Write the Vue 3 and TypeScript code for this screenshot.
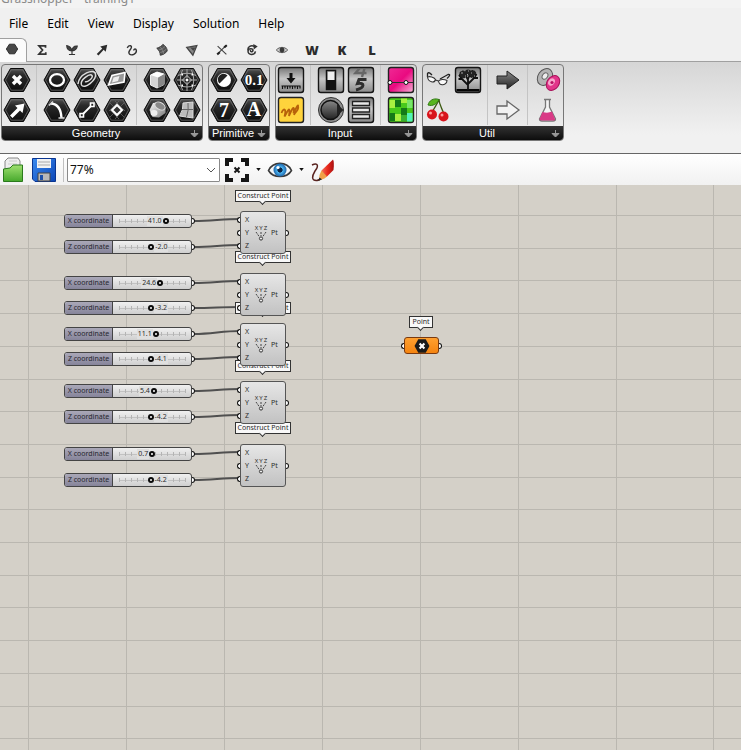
<script setup lang="ts">
import { ref } from 'vue'

interface Panel {
  name: string
  groups: string[][]
}

interface SliderNode {
  id: string
  label: string
  top: number
  value: number
}

const menu = ['File', 'Edit', 'View', 'Display', 'Solution', 'Help']

const tabs = [
  { name: 'Params', icon: 't-params' },
  { name: 'Maths', icon: 't-maths' },
  { name: 'Sets', icon: 't-sets' },
  { name: 'Vector', icon: 't-vector' },
  { name: 'Curve', icon: 't-curve' },
  { name: 'Surface', icon: 't-surface' },
  { name: 'Mesh', icon: 't-mesh' },
  { name: 'Intersect', icon: 't-intersect' },
  { name: 'Transform', icon: 't-transform' },
  { name: 'Display', icon: 't-eye' },
  { name: 'W', icon: '' },
  { name: 'K', icon: '' },
  { name: 'L', icon: '' },
]

// Each group is filled column by column, two icons per column.
const panels: Panel[] = [
  {
    name: 'Geometry',
    groups: [
      ['point', 'vector'],
      ['circle', 'arc', 'curve', 'line', 'plane', 'rectangle'],
      ['box', 'mesh', 'surface', 'brep'],
    ],
  },
  { name: 'Primitive', groups: [['boolean', 'integer', 'number', 'text']] },
  {
    name: 'Input',
    groups: [['button', 'panel'], ['toggle', 'knob', 'digits', 'list'], ['gradient', 'swatch']],
  },
  {
    name: 'Util',
    groups: [['glasses', 'cherry', 'tree', ''], ['dark-arrow', 'light-arrow'], ['discs', 'flask']],
  },
]

// Icons that are a character on a hexagon.
const letters: Record<string, { char: string; size: number; y: number }> = {
  number: { char: '0.1', size: 15, y: 20 },
  integer: { char: '7', size: 20, y: 22 },
  text: { char: 'A', size: 20, y: 21 },
}

const zoomLevel = ref('77%')
const zoomLevels = ['50%', '77%', '100%', '150%', '200%']

const sliders = ref<SliderNode[]>([
  { id: 'x1', label: 'X coordinate', top: 29, value: 41.0 },
  { id: 'z1', label: 'Z coordinate', top: 55, value: -2.0 },
  { id: 'x2', label: 'X coordinate', top: 91, value: 24.6 },
  { id: 'z2', label: 'Z coordinate', top: 116, value: -3.2 },
  { id: 'x3', label: 'X coordinate', top: 142, value: 11.1 },
  { id: 'z3', label: 'Z coordinate', top: 167, value: -4.1 },
  { id: 'x4', label: 'X coordinate', top: 199, value: 5.4 },
  { id: 'z4', label: 'Z coordinate', top: 225, value: -4.2 },
  { id: 'x5', label: 'X coordinate', top: 262, value: 0.7 },
  { id: 'z5', label: 'Z coordinate', top: 288, value: -4.2 },
])

const components = [
  { top: 26, tag: 5 },
  { top: 88, tag: 66 },
  { top: 138, tag: 117 },
  { top: 196, tag: 175 },
  { top: 259, tag: 237 },
]

const wires = sliders.value.map((s, i) => {
  const y1 = s.top + 7
  const y2 = components[Math.floor(i / 2)].top + (i % 2 === 0 ? 8 : 34)
  return `M194 ${y1} C212 ${y1} 222 ${y2} 240 ${y2}`
})

const gridX = Array.from({ length: 30 }, (_, i) => Math.round(28.4 + i * 97.87) + 0.5)
const gridY = Array.from({ length: 60 }, (_, i) => Math.round(30 + i * 32.7) + 0.5)

function valueStyle(v: number) {
  const thumb = 6 + ((v + 100) / 200) * 66
  return v >= 0 ? { right: `${77 - thumb + 4}px` } : { left: `${thumb + 3}px` }
}
</script>

<template>
  <div class="window">
    <svg class="sheet" aria-hidden="true">
      <defs>
        <linearGradient id="gHex" x1="0" y1="0" x2="0" y2="1">
          <stop offset="0" stop-color="#555" /><stop offset=".3" stop-color="#2a2a2a" /><stop offset="1" stop-color="#0c0c0c" />
        </linearGradient>
        <linearGradient id="gSteel" x1="0" y1="0" x2="0" y2="1">
          <stop offset="0" stop-color="#777" /><stop offset=".45" stop-color="#c6c6c6" /><stop offset="1" stop-color="#8a8a8a" />
        </linearGradient>
        <linearGradient id="gSolid" x1="0" y1="0" x2="1" y2="1">
          <stop offset="0" stop-color="#fff" /><stop offset="1" stop-color="#777" />
        </linearGradient>
        <linearGradient id="gPink" x1="0" y1="0" x2="1" y2="1">
          <stop offset="0" stop-color="#f02a95" /><stop offset=".5" stop-color="#ea0a80" /><stop offset="1" stop-color="#f9b4d8" />
        </linearGradient>
        <linearGradient id="gGreen" x1="0" y1="0" x2="0" y2="1">
          <stop offset="0" stop-color="#9fe070" /><stop offset="1" stop-color="#46a82c" />
        </linearGradient>
        <linearGradient id="gBlue" x1="0" y1="0" x2="1" y2="1">
          <stop offset="0" stop-color="#3b8bf0" /><stop offset="1" stop-color="#0b45b5" />
        </linearGradient>
        <linearGradient id="gRed" x1="0" y1="0" x2="1" y2="0">
          <stop offset="0" stop-color="#f4705a" /><stop offset=".5" stop-color="#e8281c" /><stop offset="1" stop-color="#a81010" />
        </linearGradient>
        <linearGradient id="gArrow" x1="0" y1="0" x2="0" y2="1">
          <stop offset="0" stop-color="#888" /><stop offset="1" stop-color="#222" />
        </linearGradient>
        <radialGradient id="gIris"><stop offset="0" stop-color="#0b2545" /><stop offset=".35" stop-color="#0b2545" /><stop offset=".45" stop-color="#4bb4f0" /><stop offset="1" stop-color="#1a62a8" /></radialGradient>
        <g id="hex">
          <path d="M8.500 3.500H21.500L28 15L21.500 26.500H8.500L2 15Z" fill="url(#gHex)" stroke="#0a0a0a" stroke-linejoin="round" />
          <path d="M9.200 4.800H20.800L26.500 15L20.800 25.200H9.200L3.500 15Z" fill="none" stroke="#777" stroke-width=".7" />
        </g>
        <g id="tile">
          <rect x="2.500" y="2.500" width="25" height="25" rx="2.500" fill="url(#gSteel)" stroke="#161616" stroke-width="1.400" />
        </g>
      </defs>

      <symbol id="t-params" viewBox="0 0 16 16"><path d="M5 2.500H11L14.500 8L11 13.500H5L1.500 8Z" fill="#484848" stroke="#222" /></symbol>
      <symbol id="t-maths" viewBox="0 0 16 16"><path d="M12 5.500V3.200H4.500L8.600 8L4.500 12.800H12.300V10.500" fill="none" stroke="#333" stroke-width="2" /></symbol>
      <symbol id="t-sets" viewBox="0 0 16 16"><path d="M8 13V8M8 9C7 5 5 3.500 2 3C2 6.500 4.500 8.500 8 9C8 6 10 3 14 3.500C13.500 7 11 8.500 8 9M4.500 13.200H11.500" fill="#444" stroke="#333" stroke-width="1.300" /></symbol>
      <symbol id="t-vector" viewBox="0 0 16 16"><path d="M2 12.500L8.300 6.200L6 4L14 2L12.200 10L9.900 7.700L4 14.200Z" fill="#2c2c2c" /></symbol>
      <symbol id="t-curve" viewBox="0 0 16 16"><path d="M2.500 5.500C5 1.500 8.500 3 7 6C5.500 9 3 10 5 12.500C7.500 15 13.500 12.500 13 8.500C12.600 6 10 6.500 10 8.500" fill="none" stroke="#333" stroke-width="1.600" /></symbol>
      <symbol id="t-surface" viewBox="0 0 16 16"><path d="M2 6C5 5 8 3.500 9 1.500C12 3.500 14 6 14 9C12 12 9 13.500 6 14C6 10.500 4.500 8 2 6Z" fill="#555" stroke="#333" /><path d="M6 4.500Q9.500 8 10 12.500M4.500 8Q9 7 11.500 4M6 11Q10.500 10 13.500 6.500" fill="none" stroke="#999" stroke-width=".7" /></symbol>
      <symbol id="t-mesh" viewBox="0 0 16 16"><path d="M2 5L13.500 3L9 14Z" fill="#888" stroke="#444" stroke-width="1.500" /><path d="M6 5L9.500 9L12 5Z" fill="#444" /></symbol>
      <symbol id="t-intersect" viewBox="0 0 16 16"><path d="M3 3.500L13 13M13 2.500L3 12.500" stroke="#444" stroke-width="1.300" /><path d="M10.500 5L13.500 2.500M2.500 13L5.500 10.500" stroke="#222" stroke-width="2.400" /></symbol>
      <symbol id="t-transform" viewBox="0 0 16 16"><path d="M12 9.500C11 14.500 3 14.500 3.500 9C4 5.500 10 6 9 9C8 11 5.500 9.500 6.500 8M3.500 8.500C2.500 4 7 2 11 4" fill="none" stroke="#333" stroke-width="1.700" /><path d="M9.500 1L14.500 4L10 7.500Z" fill="#333" /></symbol>
      <symbol id="t-eye" viewBox="0 0 16 16"><path d="M1.500 8C5 4 11 4 14.500 8C11 12 5 12 1.500 8Z" fill="#ccc" stroke="#444" /><circle cx="8" cy="8" r="2.800" fill="#3a3a3a" /></symbol>

      <symbol id="point" viewBox="0 0 30 30"><use href="#hex" /><path d="M11 11L19 19M19 11L11 19" stroke="#fff" stroke-width="3.400" /></symbol>
      <symbol id="vector" viewBox="0 0 30 30"><use href="#hex" /><path d="M8 20.500L15.500 13L13 10.500L22.500 8.500L20.500 18L18 15.500L10.500 23Z" fill="#fff" /></symbol>
      <symbol id="circle" viewBox="0 0 30 30"><use href="#hex" /><ellipse cx="15" cy="15" rx="7" ry="5.800" fill="none" stroke="#fff" stroke-width="2.300" /></symbol>
      <symbol id="arc" viewBox="0 0 30 30"><use href="#hex" /><path d="M9 8.500C15 9 19 14 19.500 23" fill="none" stroke="#fff" stroke-width="2.400" /><path d="M7 10.500L11 6.500M16.500 23H22.500" stroke="#ddd" stroke-width="1.500" /></symbol>
      <symbol id="curve" viewBox="0 0 30 30"><use href="#hex" /><path d="M6 19C7 9 22 3 23.500 8.500C25 15 12 25 9.500 20C7.500 15 18 8 20 10.500C21.500 13 15 18 13 16.500" fill="none" stroke="#ddd" stroke-width="1.500" /></symbol>
      <symbol id="line" viewBox="0 0 30 30"><use href="#hex" /><path d="M10 20L20 10" stroke="#fff" stroke-width="1.800" /><path d="M8 18.500H11.500V22H8ZM18.500 8H22V11.500H18.500Z" fill="#222" stroke="#fff" stroke-width="1.600" /></symbol>
      <symbol id="plane" viewBox="0 0 30 30"><use href="#hex" /><path d="M6.500 20L10 10.500L23 7.500L22 17Z" fill="#999" stroke="#fff" stroke-width="1.600" /><path d="M11.500 12.500L17.500 11L16 16L10 17.500Z" fill="#eee" /></symbol>
      <symbol id="rectangle" viewBox="0 0 30 30"><use href="#hex" /><path d="M8 8L22 22M22 8L8 22M8 15L17 24M13 6L23 16M17 6L7 16M22 14L13 24" stroke="#666" stroke-width=".8" /><path d="M15 10L20 15L15 20L10 15Z" fill="#333" stroke="#fff" stroke-width="2" /></symbol>
      <symbol id="box" viewBox="0 0 30 30"><use href="#hex" /><path d="M8.500 10L15 7L22 9V19.500L15 23L8.500 20Z" fill="#d4d4d4" stroke="#eee" /><path d="M16 12.500V23L22 19.500V9Z" fill="#888" /><path d="M8.500 10L16 12.500L22 9L15 7Z" fill="#fff" /></symbol>
      <symbol id="surface" viewBox="0 0 30 30"><use href="#hex" /><path d="M6 10.500Q15 6 24 10.500M5 15H25M6 20Q15 24 24 20M10.500 5Q6 15 10.500 25M15 4V26M19.500 5Q24 15 19.500 25" fill="none" stroke="#aaa" /><path d="M15 10.500L19.500 15L15 19.500L10.500 15Z" fill="none" stroke="#ccc" /><path d="M9.500 9.500H11M19.500 9.500H21M9.500 20.500H11M19.500 20.500H21M14 15H16" stroke="#fff" stroke-width="2" /></symbol>
      <symbol id="mesh" viewBox="0 0 30 30"><use href="#hex" /><path d="M7.500 15L11 8L18 7L23.500 12V18L17 22.500L10.500 22Z" fill="url(#gSolid)" /><ellipse cx="18" cy="11" rx="5.500" ry="3.500" fill="#888" stroke="#ddd" transform="rotate(30 18 11)" /><ellipse cx="12" cy="18" rx="3.500" ry="3" fill="#eee" /></symbol>
      <symbol id="brep" viewBox="0 0 30 30"><use href="#hex" /><path d="M11 8L21 7V23L7.500 21Q11.500 15 11 8Z" fill="#bbb" stroke="#ddd" /><path d="M16 8Q17 15 14.500 22M10 14.500H21" fill="none" stroke="#666" /></symbol>
      <symbol id="boolean" viewBox="0 0 30 30"><use href="#hex" /><circle cx="15" cy="15" r="7" fill="#fff" /><path d="M10.500 18.500A5.500 5.500 0 0 1 18.500 10.500Z" fill="#222" /></symbol>

      <symbol id="button" viewBox="0 0 30 30"><use href="#tile" /><path d="M13.500 8H16.500V13H19.500L15 18.500L10.500 13H13.500Z" fill="#111" /><path d="M5.500 21H24.500M6.500 21V24M9 21V23.500M11.500 21V24M14 21V23.500M16.500 21V24M19 21V23.500M21.500 21V24M24 21V23.500" stroke="#111" stroke-width="1.200" /></symbol>
      <symbol id="panel" viewBox="0 0 30 30"><rect x="2.500" y="2.500" width="25" height="25" rx="2.500" fill="#ffd33c" stroke="#222" stroke-width="1.400" /><path d="M5.500 18C8 12 10.500 14 8.500 21.500C12 15 14.500 10 13 21C16 14 19 8 17.500 18.500C20 13 22.500 8.500 22 11C23.500 15 19 17 18 20" fill="none" stroke="#b8620a" stroke-width="1.800" /></symbol>
      <symbol id="toggle" viewBox="0 0 30 30"><use href="#tile" /><rect x="10.500" y="5.500" width="9" height="19" fill="#b4b4b4" stroke="#111" stroke-width="1.500" /><rect x="12" y="7" width="6" height="8.500" fill="#eee" /><rect x="11" y="15" width="8" height="9" fill="#111" /></symbol>
      <symbol id="digits" viewBox="0 0 30 30"><use href="#tile" /><path d="M13.500 3.500L9.500 8H20.500M18.500 3.500L16 12" fill="none" stroke="#666" stroke-width="2.400" /><path d="M20.500 14.500H13L11.500 18.500C19 17 19 23 10 25" fill="none" stroke="#2e2e2e" stroke-width="3" /></symbol>
      <symbol id="knob" viewBox="0 0 30 30"><circle cx="15" cy="15" r="12.500" fill="#8f8f8f" stroke="#333" /><circle cx="14.500" cy="15" r="9.500" fill="url(#gArrow)" stroke="#111" stroke-width="1.500" /><path d="M21 9L27.500 15L21 21Z" fill="#222" /></symbol>
      <symbol id="list" viewBox="0 0 30 30"><use href="#tile" /><path d="M6.500 6.500H23.500V10.500H6.500ZM6.500 13H23.500V17H6.500ZM6.500 19.500H23.500V23.500H6.500Z" fill="#e8e8e8" stroke="#222" stroke-width="1.300" /></symbol>
      <symbol id="gradient" viewBox="0 0 30 30"><rect x="2.500" y="2.500" width="25" height="25" rx="2.500" fill="url(#gPink)" stroke="#222" stroke-width="1.400" /><path d="M3 17.500H27" stroke="#333" /><circle cx="4" cy="17.500" r="2" fill="#fff" stroke="#111" /><circle cx="20" cy="17.500" r="2" fill="#fff" stroke="#111" /></symbol>
      <symbol id="swatch" viewBox="0 0 30 30"><rect x="2.500" y="2.500" width="25" height="25" rx="2.500" fill="#48c91b" stroke="#222" stroke-width="1.400" /><path d="M3.500 5H9V13H3.500ZM15 3.500H21V8H15ZM9 19H15V26H9Z" fill="#a8f040" /><path d="M9 5H15V12H9ZM3.500 18H9V26H3.500ZM15 13H21V20H15Z" fill="#147a18" /><path d="M21 5H26.500V13H21Z" fill="#78e66a" /><path d="M21 18H26.500V26.500H21Z" fill="#53f3b8" /><path d="M15 20H21V26H15Z" fill="#38b030" /></symbol>

      <symbol id="glasses" viewBox="0 0 30 30"><path d="M4.500 12L4.500 8.500C5.500 7 7 8 9 10M17 14L25 9.500C27.500 9 27 11 24 13.500" fill="none" stroke="#222" stroke-width="1.300" /><path d="M4.500 12C6.500 11 11 12 12.500 14.500C11.500 18.500 5.500 17.500 4.500 12ZM15.500 16C17 14 21.500 14 24 15.500C23.500 20.500 16.500 21.500 15.500 16ZM12.500 15L15.500 16" fill="#fafafa" stroke="#333" stroke-width="1.100" /></symbol>
      <symbol id="tree" viewBox="0 0 30 30"><use href="#tile" /><path d="M3.500 24H26.500V26.500H3.500Z" fill="#050505" /><path d="M15 25V14M15 20L9 14L5.500 14M15 19L21 13L25 13M15 15L11 7M15 14L18.500 6M9 14L6 10M21 13L23.500 9M12 10L8 7M17 10L21 7" fill="none" stroke="#111" stroke-width="1.800" /><circle cx="10" cy="9.500" r="3.500" fill="#222" stroke="#111" stroke-dasharray="2 1" /><circle cx="19.500" cy="9" r="3.500" fill="#222" stroke="#111" stroke-dasharray="2 1" /><circle cx="15" cy="7.500" r="3" fill="#222" /><path d="M8 8H10M12 11H13M18 8H19M21 11H22M15 6H16M14 9.500H15" stroke="#aaa" /></symbol>
      <symbol id="cherry" viewBox="0 0 30 30"><path d="M16 4C15 10 10 12 9 19M16 4C16 11 20 14 21 20" fill="none" stroke="#3d5a12" stroke-width="1.300" /><path d="M16 4.500C10 2.500 6 6 5 10C10 11.500 14 9 16 4.500Z" fill="#58b51e" stroke="#2e7a10" /><circle cx="9" cy="19.500" r="5" fill="#d8141c" /><circle cx="20.500" cy="21.500" r="5" fill="#d8141c" /><circle cx="7.500" cy="18" r="1.500" fill="#ff9a9a" /><circle cx="19" cy="20" r="1.500" fill="#ff9a9a" /></symbol>
      <symbol id="dark-arrow" viewBox="0 0 30 30"><path d="M4 11H14V6L26 15L14 24V19H4Z" fill="url(#gArrow)" stroke="#222" /></symbol>
      <symbol id="light-arrow" viewBox="0 0 30 30"><path d="M4 11H14V6L26 15L14 24V19H4Z" fill="#f2f2f2" stroke="#666" stroke-width="1.300" /></symbol>
      <symbol id="discs" viewBox="0 0 30 30"><ellipse cx="12" cy="12" rx="7" ry="9" fill="#b4b4b4" stroke="#555" transform="rotate(35 12 12)" /><ellipse cx="12" cy="11" rx="2.500" ry="3.500" fill="#eee" stroke="#666" transform="rotate(35 12 11)" /><ellipse cx="20" cy="18" rx="6" ry="8" fill="#e2358a" stroke="#a81058" transform="rotate(35 20 18)" /><ellipse cx="18.500" cy="17" rx="3" ry="4" fill="#f7a8cd" transform="rotate(35 18.500 17)" /><circle cx="19" cy="17.500" r="1.600" fill="#b81062" /></symbol>
      <symbol id="flask" viewBox="0 0 30 30"><path d="M11 4.500H18M12.500 5V12L6.500 24Q6.500 26 9 26H20Q22.500 26 22.500 24L16.500 12V5" fill="#f4f4f4" stroke="#777" stroke-width="1.300" /><path d="M9.500 17L6.500 24Q6.500 25.500 9 25.500H20Q22.500 25.500 22 24L19 16.500Q15 18.500 9.500 17Z" fill="#d93a86" /></symbol>
    </svg>

    <header class="chrome">
      <div class="title">Grasshopper - training1</div>
      <nav class="menu" aria-label="Main menu">
        <button v-for="m in menu" :key="m" type="button">{{ m }}</button>
      </nav>
      <div class="tabs" role="tablist">
        <button v-for="(t, i) in tabs" :key="t.name + i" type="button" role="tab" class="tab" :class="{ active: i === 0 }" :aria-selected="i === 0" :aria-label="t.name">
          <svg v-if="t.icon" class="tab-icon"><use :href="'#' + t.icon" /></svg>
          <span v-else>{{ t.name }}</span>
        </button>
      </div>
    </header>

    <section class="ribbon">
      <div v-for="p in panels" :key="p.name" class="panel">
        <div class="groups">
          <div v-for="(g, gi) in p.groups" :key="gi" class="group">
            <template v-for="(icon, k) in g" :key="k">
              <button v-if="icon" type="button" class="tool" :aria-label="icon">
                <svg v-if="letters[icon]" class="tool-icon" viewBox="0 0 30 30">
                  <use href="#hex" />
                  <text class="letter" x="15" :y="letters[icon].y" :font-size="letters[icon].size">{{ letters[icon].char }}</text>
                </svg>
                <svg v-else class="tool-icon"><use :href="'#' + icon" /></svg>
              </button>
              <span v-else></span>
            </template>
          </div>
        </div>
        <div class="caption">
          <span>{{ p.name }}</span>
          <svg class="expand" viewBox="0 0 9 9"><path d="M4.500 1V5M1 4.500H8L4.500 8Z" fill="#999" stroke="#999" /></svg>
        </div>
      </div>
    </section>

    <div class="toolbar">
      <button type="button" class="bar-btn" aria-label="Open">
        <svg width="26" height="28" viewBox="0 0 26 28"><path d="M5 13V5L8 2H18L20 5V13Z" fill="#eee" stroke="#888" /><path d="M9 5H17M8 8H17" stroke="#ccc" /><path d="M3.500 13L10 12L13 9H22.500V25.500H3.500Z" fill="url(#gGreen)" stroke="#2a7a1c" /></svg>
      </button>
      <button type="button" class="bar-btn save" aria-label="Save">
        <svg width="26" height="28" viewBox="0 0 26 28"><path d="M1.500 2.500H24.500V25.500H4L1.500 23Z" fill="url(#gBlue)" stroke="#0a3590" /><path d="M6 3H20V12H6Z" fill="#f2f2f2" /><path d="M7 6H19M7 9H19" stroke="#aaa" /><path d="M7 17H19V25H7Z" fill="#b8b8b8" stroke="#444" /><path d="M9 19H12V24H9Z" fill="#1c4fa8" /></svg>
      </button>
      <span class="divider"></span>
      <div class="combo">
        <select v-model="zoomLevel" aria-label="Zoom level">
          <option v-for="z in zoomLevels" :key="z">{{ z }}</option>
        </select>
        <svg class="chevron" viewBox="0 0 10 6"><path d="M1 1L5 5L9 1" fill="none" stroke="#555" /></svg>
      </div>
      <button type="button" class="bar-btn extents" aria-label="Zoom extents">
        <svg width="26" height="26" viewBox="0 0 26 26"><path d="M3 9V3H9M17 3H23V9M23 17V23H17M9 23H3V17" fill="none" stroke="#161616" stroke-width="4" /><path d="M10.500 10.500L15.500 15.500M15.500 10.500L10.500 15.500" stroke="#161616" stroke-width="2" /></svg>
      </button>
      <svg class="caret" viewBox="0 0 6 4"><path d="M0 0H6L3 4Z" fill="#111" /></svg>
      <button type="button" class="bar-btn" aria-label="Preview">
        <svg width="26" height="26" viewBox="0 0 26 26"><path d="M1.500 13.500C6 4 20 4 24.500 13.500C20 21.500 6 21.500 1.500 13.500Z" fill="#f3f6f8" stroke="#3a3a3a" stroke-width="1.600" /><circle cx="13" cy="13" r="6.500" fill="url(#gIris)" /><circle cx="11" cy="10.500" r="1.600" fill="#fff" /></svg>
      </button>
      <svg class="caret" viewBox="0 0 6 4"><path d="M0 0H6L3 4Z" fill="#111" /></svg>
      <button type="button" class="bar-btn" aria-label="Sketch">
        <svg width="26" height="26" viewBox="0 0 26 26"><path d="M2 8C8 5 9 9 5 14C2 19 1 24 7 23.500C9 23 10 22 12 21.500" fill="none" stroke="#5a2420" stroke-width="1.500" /><path d="M23 2.500Q24.500 5 23.500 13L16.500 20L13 17L11.500 13.500Z" fill="url(#gRed)" /><path d="M11.500 13.500L17 19.500L14.500 21.500L9 23.500L9.500 18Z" fill="#f0a048" /><path d="M9.300 20.500L12 22.300L8.500 24Z" fill="#222" /></svg>
      </button>
    </div>

    <main class="canvas">
      <svg class="grid" aria-hidden="true">
        <line v-for="x in gridX" :key="'x' + x" :x1="x" y1="0" :x2="x" y2="100%" />
        <line v-for="y in gridY" :key="'y' + y" x1="0" :y1="y" x2="100%" :y2="y" />
        <path v-for="(w, i) in wires" :key="i" class="wire" :d="w" />
      </svg>

      <div v-for="s in sliders" :key="s.id" class="slider" :style="{ top: s.top + 'px' }">
        <label :for="s.id">{{ s.label }}</label>
        <div class="rail">
          <input :id="s.id" v-model.number="s.value" type="range" min="-100" max="100" step="0.1" />
          <output :for="s.id" :style="valueStyle(s.value)">{{ s.value.toFixed(1) }}</output>
        </div>
        <i class="port out"></i>
      </div>

      <div v-for="c in components" :key="'t' + c.tag" class="tag wide" :style="{ top: c.tag + 'px' }">Construct Point</div>

      <div v-for="c in components" :key="'c' + c.top" class="component" :style="{ top: c.top + 'px' }">
        <div class="inputs"><span>X</span><span>Y</span><span>Z</span></div>
        <div class="core">
          <div class="axes"><span>X</span><span>Y</span><span>Z</span></div>
          <svg viewBox="0 0 12 9"><path d="M1 0L4.500 5M6 0V4M11 0L7.500 5" fill="none" stroke="#444" stroke-dasharray="2 1" /><circle cx="6" cy="6.500" r="1.600" fill="#eee" stroke="#333" /></svg>
        </div>
        <span class="result">Pt</span>
        <i class="port in p1"></i><i class="port in p2"></i><i class="port in p3"></i>
        <i class="port out"></i>
      </div>

      <div class="tag point-tag">Point</div>
      <div class="param">
        <i class="port in"></i>
        <svg viewBox="0 0 30 30"><path d="M8 2.500H22L29 15L22 27.500H8L1 15Z" fill="#1b1b1b" /><path d="M10.500 10.500L19.500 19.500M19.500 10.500L10.500 19.500" stroke="#fff" stroke-width="4" /></svg>
        <i class="port out"></i>
      </div>
    </main>
  </div>
</template>

<style>
body {
  margin: 0;
}
</style>

<style scoped>
.window {
  min-height: 100vh;
  display: flex;
  flex-direction: column;
  overflow: hidden;
  background: #f0f0f0;
  color: #000;
  font-family: 'Noto Sans', 'Open Sans', sans-serif;
}
button {
  border: 0;
  padding: 0;
  background: none;
  color: inherit;
  font-family: inherit;
}
svg {
  display: block;
}
.sheet {
  position: absolute;
  width: 0;
  height: 0;
}
.title {
  height: 8px;
  padding-left: 1px;
  display: flex;
  align-items: flex-end;
  overflow: hidden;
  font-size: 12px;
  line-height: 18px;
  color: #8a8a8a;
  background: #f3f3f3;
}
.menu {
  display: flex;
  gap: 19px;
  height: 30px;
  padding: 0 9px;
}
.menu button {
  font-size: 12px;
  line-height: 32px;
}
.tabs {
  display: flex;
  height: 24px;
  box-sizing: border-box;
  border-bottom: 1px solid #a0a0a0;
}
.tab {
  width: 30px;
  height: 24px;
  display: flex;
  align-items: center;
  justify-content: center;
  font: 800 13px 'Open Sans', sans-serif;
  color: #2c2c2c;
}
.tab.active {
  width: 27px;
  padding: 0 2px 4px 0;
  box-sizing: border-box;
  background: #fbfbfb;
  border: 1px solid #a0a0a0;
  border-width: 1px 1px 0 0;
  border-radius: 0 6px 0 0;
}
.tab-icon {
  width: 14px;
  height: 14px;
}
.ribbon {
  display: flex;
  gap: 5px;
  padding: 2px 1px 12px;
  background: linear-gradient(#d6d6d6, #f1f1f1 80%);
}
.panel {
  border: 1px solid #777;
  border-radius: 4px;
  overflow: hidden;
  background: linear-gradient(#d6d6d6, #f1f1f1);
}
.groups {
  display: flex;
  padding-bottom: 1px;
}
.group {
  display: grid;
  grid-auto-flow: column;
  grid-template-rows: 30px 30px;
  grid-auto-columns: 30px;
}
.group + .group {
  margin-left: 4px;
  padding-left: 5px;
  border-left: 1px solid #c4c4c4;
}
.tool-icon {
  width: 30px;
  height: 30px;
}
.letter {
  fill: #fff;
  font-family: 'Liberation Serif', serif;
  font-weight: 700;
  text-anchor: middle;
}
.caption {
  display: grid;
  grid-template-columns: 1fr 12px;
  align-items: center;
  height: 14px;
  background: linear-gradient(#333, #0d0d0d);
  color: #fff;
  font: 11px/14px 'Liberation Sans', sans-serif;
  text-align: center;
}
.expand {
  width: 9px;
  height: 9px;
}
.toolbar {
  display: flex;
  align-items: center;
  height: 31px;
  border-top: 1px solid #666;
  background: linear-gradient(#fff, #f1f1f1);
}
.save {
  margin-left: 5px;
}
.divider {
  width: 1px;
  height: 24px;
  margin: 0 3px 0 6px;
  background: #c0c0c0;
}
.combo {
  display: grid;
  align-items: center;
}
.combo > * {
  grid-area: 1 / 1;
}
.combo select {
  appearance: none;
  width: 153px;
  height: 24px;
  padding: 0 20px 1px 2px;
  border: 1px solid #8a8a8a;
  border-radius: 1px;
  background: #fff;
  color: #111;
  font: 12px 'Noto Sans', sans-serif;
}
.chevron {
  width: 10px;
  height: 6px;
  margin-right: 4px;
  justify-self: end;
  pointer-events: none;
}
.extents {
  margin-left: 4px;
}
.caret {
  width: 5px;
  height: 3px;
  margin: 0 6px;
}
.canvas {
  position: relative;
  flex: 1;
  min-height: 320px;
  overflow: hidden;
  background: #d4d0c8;
  font-size: 7px;
  line-height: 10px;
  color: #2c2c2c;
}
.grid {
  position: absolute;
  width: 100%;
  height: 100%;
}
.grid line {
  stroke: #bab7b0;
}
.grid .wire {
  fill: none;
  stroke: #505050;
  stroke-width: 2;
}
.slider {
  position: absolute;
  left: 64px;
  width: 128px;
  height: 14px;
  box-sizing: border-box;
  display: flex;
  border: 1px solid #444;
  border-radius: 3px;
  background: linear-gradient(#f0f0f0, #cfcfcf);
}
.slider label {
  width: 48px;
  border-right: 1px solid #444;
  border-radius: 2px 0 0 2px;
  background: linear-gradient(#aaa8b8, #86849a);
  color: #26262e;
  line-height: 12px;
  text-align: center;
}
.rail {
  position: relative;
  flex: 1;
}
.rail input {
  appearance: none;
  display: block;
  width: 72px;
  height: 12px;
  margin: 0 3px;
  background:
    repeating-linear-gradient(90deg, #b4b4b4 0 1px, transparent 1px 6px) 3px 4px / 67px 4px no-repeat,
    linear-gradient(#c2c2c2, #c2c2c2) 3px 6px / 67px 1px no-repeat;
}
.rail input::-webkit-slider-thumb {
  appearance: none;
  width: 6px;
  height: 6px;
  box-sizing: border-box;
  border: 2px solid #0a0a0a;
  border-radius: 50%;
  background: #fff;
}
.rail output {
  position: absolute;
  top: 1px;
  padding: 0 1px;
  line-height: 10px;
  background: #dfdfdf;
  pointer-events: none;
}
.port {
  position: absolute;
  width: 3px;
  height: 6px;
  box-sizing: border-box;
  border: 1px solid #111;
  background: #fff;
}
.port.in {
  left: -4px;
  border-right: 0;
  border-radius: 3px 0 0 3px;
}
.port.out {
  right: -4px;
  top: calc(50% - 3px);
  border-left: 0;
  border-radius: 0 3px 3px 0;
}
.tag {
  position: absolute;
  height: 12px;
  box-sizing: border-box;
  border: 1px solid #333;
  background: #f8f8f8;
  text-align: center;
  white-space: nowrap;
}
.tag::after {
  content: '';
  position: absolute;
  left: calc(50% - 3px);
  top: 8px;
  width: 4px;
  height: 4px;
  border: 1px solid #333;
  border-width: 0 1px 1px 0;
  background: #f8f8f8;
  transform: rotate(45deg);
}
.tag.wide {
  left: 235px;
  width: 56px;
}
.point-tag {
  left: 409px;
  top: 131px;
  width: 24px;
}
.component {
  position: absolute;
  left: 240px;
  width: 46px;
  height: 43px;
  box-sizing: border-box;
  display: grid;
  grid-template-columns: 11px 18px 1fr;
  align-items: center;
  border: 1px solid #555;
  border-radius: 3px;
  background: linear-gradient(#e6e6e6, #c2c2c2);
}
.inputs {
  display: grid;
  line-height: 13px;
  padding-left: 4px;
}
.core {
  display: grid;
  justify-items: center;
  font-size: 6px;
  line-height: 7px;
}
.axes {
  display: flex;
  gap: 1px;
}
.core svg {
  width: 12px;
  height: 9px;
}
.result {
  padding-left: 1px;
}
.p1 {
  top: 5px;
}
.p2 {
  top: 18px;
}
.p3 {
  top: 31px;
}
.param {
  position: absolute;
  left: 404px;
  top: 152px;
  width: 35px;
  height: 17px;
  box-sizing: border-box;
  display: flex;
  align-items: center;
  justify-content: center;
  border: 1px solid #7a3a10;
  border-radius: 3px;
  background: linear-gradient(#ffa030, #f58410);
}
.param svg {
  width: 16px;
  height: 16px;
}
.param .port.in {
  top: calc(50% - 3px);
}
</style>
